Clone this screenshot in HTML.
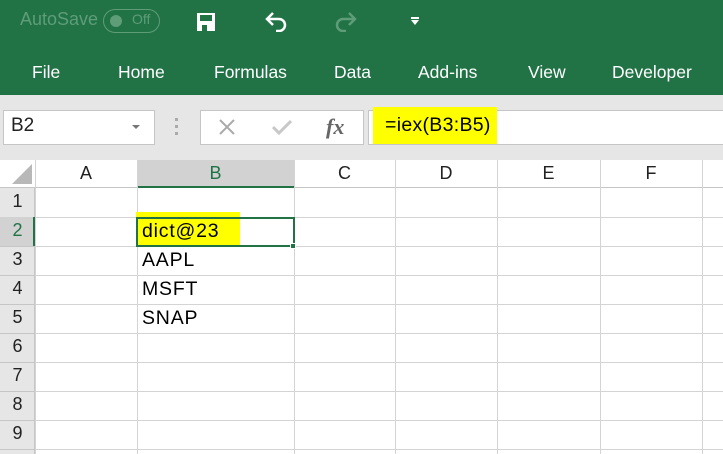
<!DOCTYPE html><html><head><style>
*{margin:0;padding:0;box-sizing:border-box}
body{width:723px;height:454px;overflow:hidden;background:#fff;font-family:"Segoe UI","Liberation Sans",sans-serif;position:relative}
.a{position:absolute}
.tab{position:absolute;top:62px;color:#fff;font-size:17.5px}
.hl{position:absolute;background:#d4d4d4}
.vl{position:absolute;width:1px;background:#d4d4d4;top:160px;height:294px}
.rn{position:absolute;left:0;width:35px;text-align:center;font-size:18px;color:#222}
.cn{position:absolute;top:163px;font-size:18px;color:#222;text-align:center}
.cell{position:absolute;left:142px;font-size:19.5px;letter-spacing:0.8px;color:#000}
</style></head><body>
<div class="a" style="left:0;top:0;width:723px;height:95px;background:#217346"></div>
<div class="a" style="left:20px;top:9px;font-size:18px;color:#5f9c78">AutoSave</div>
<div class="a" style="left:103px;top:9px;width:57px;height:24px;border:1px solid #5f9c78;border-radius:12px"></div>
<div class="a" style="left:110px;top:15px;width:12px;height:12px;border-radius:6px;background:#5f9c78"></div>
<div class="a" style="left:132px;top:11px;font-size:14px;color:#5f9c78">Off</div>
<svg class="a" style="left:196px;top:12px" width="20" height="20" viewBox="0 0 20 20"><rect x="1" y="1" width="18" height="18" fill="#fff"/><rect x="4" y="3" width="12" height="6" fill="#217346"/><rect x="6" y="13" width="5" height="6" fill="#217346"/></svg>
<svg class="a" style="left:264px;top:10px" width="24" height="22" viewBox="0 0 24 22"><path d="M4 9 H15 A6 6 0 0 1 15 21 H12" fill="none" stroke="#fff" stroke-width="2.5"/><path d="M9 3 L3 9 L9 15" fill="none" stroke="#fff" stroke-width="2.5"/></svg>
<svg class="a" style="left:334px;top:10px" width="24" height="22" viewBox="0 0 24 22"><path d="M20 9 H9 A6 6 0 0 0 9 21 H12" fill="none" stroke="#5f9c78" stroke-width="2.5"/><path d="M15 3 L21 9 L15 15" fill="none" stroke="#5f9c78" stroke-width="2.5"/></svg>
<div class="a" style="left:411px;top:17px;width:8px;height:2px;background:#fff"></div>
<svg class="a" style="left:411px;top:20px" width="8" height="5"><path d="M0 0H8L4 5Z" fill="#fff"/></svg>
<div class="tab" style="left:32px">File</div>
<div class="tab" style="left:118px">Home</div>
<div class="tab" style="left:214px">Formulas</div>
<div class="tab" style="left:334px">Data</div>
<div class="tab" style="left:418px">Add-ins</div>
<div class="tab" style="left:528px">View</div>
<div class="tab" style="left:612px">Developer</div>
<div class="a" style="left:0;top:95px;width:723px;height:65px;background:#e6e6e6"></div>
<div class="a" style="left:3px;top:110px;width:152px;height:35px;background:#fff;border:1px solid #c6c6c6"></div>
<div class="a" style="left:11px;top:115px;font-size:19px;color:#222">B2</div>
<svg class="a" style="left:132px;top:125px" width="8" height="4"><path d="M0 0H8L4 4Z" fill="#777"/></svg>
<div class="a" style="left:175px;top:118px;width:3px;height:3px;background:#aaa"></div>
<div class="a" style="left:175px;top:125px;width:3px;height:3px;background:#aaa"></div>
<div class="a" style="left:175px;top:132px;width:3px;height:3px;background:#aaa"></div>
<div class="a" style="left:200px;top:110px;width:164px;height:35px;background:#fff;border:1px solid #c6c6c6"></div>
<svg class="a" style="left:219px;top:119px" width="16" height="16"><path d="M1 1L15 15M15 1L1 15" stroke="#aaa" stroke-width="2"/></svg>
<svg class="a" style="left:272px;top:119px" width="20" height="16"><path d="M1 8L7 14L19 2" fill="none" stroke="#c8c8c8" stroke-width="3"/></svg>
<div class="a" style="left:326px;top:114px;font-size:22px;font-style:italic;font-weight:bold;font-family:'Liberation Serif',serif;color:#666">fx</div>
<div class="a" style="left:368px;top:110px;width:360px;height:35px;background:#fff;border:1px solid #c6c6c6"></div>
<div class="a" style="left:373px;top:107px;width:124px;height:37px;background:#ffff00"></div>
<div class="a" style="left:385px;top:114px;font-size:19.5px;letter-spacing:0.3px;color:#000">=iex(B3:B5)</div>
<div class="a" style="left:0;top:160px;width:723px;height:28px;background:#fff;border-bottom:1px solid #c6c6c6"></div>
<div class="a" style="left:0;top:188px;width:35px;height:266px;background:#e6e6e6;border-right:1px solid #c6c6c6"></div>
<svg class="a" style="left:11px;top:163px" width="22" height="22"><path d="M21 1V21H1Z" fill="#b8b8b8"/></svg>
<div class="a" style="left:137px;top:160px;width:157px;height:28px;background:#d2d2d2;border-bottom:2px solid #217346"></div>
<div class="vl" style="left:35px"></div><div class="vl" style="left:137px"></div><div class="vl" style="left:294px"></div><div class="vl" style="left:395px"></div><div class="vl" style="left:497px"></div><div class="vl" style="left:600px"></div><div class="vl" style="left:702px"></div>
<div class="hl" style="left:35px;top:217px;width:688px;height:1px"></div>
<div class="hl" style="left:35px;top:246px;width:688px;height:1px"></div>
<div class="hl" style="left:35px;top:275px;width:688px;height:1px"></div>
<div class="hl" style="left:35px;top:304px;width:688px;height:1px"></div>
<div class="hl" style="left:35px;top:333px;width:688px;height:1px"></div>
<div class="hl" style="left:35px;top:362px;width:688px;height:1px"></div>
<div class="hl" style="left:35px;top:391px;width:688px;height:1px"></div>
<div class="hl" style="left:35px;top:420px;width:688px;height:1px"></div>
<div class="hl" style="left:35px;top:449px;width:688px;height:1px"></div>
<div class="hl" style="left:0;top:217px;width:35px;height:1px;background:#c6c6c6"></div>
<div class="hl" style="left:0;top:246px;width:35px;height:1px;background:#c6c6c6"></div>
<div class="hl" style="left:0;top:275px;width:35px;height:1px;background:#c6c6c6"></div>
<div class="hl" style="left:0;top:304px;width:35px;height:1px;background:#c6c6c6"></div>
<div class="hl" style="left:0;top:333px;width:35px;height:1px;background:#c6c6c6"></div>
<div class="hl" style="left:0;top:362px;width:35px;height:1px;background:#c6c6c6"></div>
<div class="hl" style="left:0;top:391px;width:35px;height:1px;background:#c6c6c6"></div>
<div class="hl" style="left:0;top:420px;width:35px;height:1px;background:#c6c6c6"></div>
<div class="hl" style="left:0;top:449px;width:35px;height:1px;background:#c6c6c6"></div>
<div class="a" style="left:0;top:217px;width:35px;height:29px;background:#d2d2d2;border-right:2px solid #217346"></div>
<div class="cn" style="left:35px;width:102px">A</div>
<div class="cn" style="left:137px;width:157px;color:#217346">B</div>
<div class="cn" style="left:294px;width:101px">C</div>
<div class="cn" style="left:395px;width:102px">D</div>
<div class="cn" style="left:497px;width:103px">E</div>
<div class="cn" style="left:600px;width:102px">F</div>
<div class="rn" style="top:191px">1</div>
<div class="rn" style="top:220px;color:#217346">2</div>
<div class="rn" style="top:249px">3</div>
<div class="rn" style="top:278px">4</div>
<div class="rn" style="top:307px">5</div>
<div class="rn" style="top:336px">6</div>
<div class="rn" style="top:365px">7</div>
<div class="rn" style="top:394px">8</div>
<div class="rn" style="top:423px">9</div>
<div class="a" style="left:136px;top:212px;width:104px;height:34px;background:#ffff00"></div>
<div class="a" style="left:136px;top:217px;width:159px;height:30px;border:2px solid #217346"></div>
<div class="a" style="left:290px;top:243px;width:6px;height:6px;background:#217346;border:1px solid #fff"></div>
<div class="cell" style="top:220px">dict@23</div>
<div class="cell" style="top:249px">AAPL</div>
<div class="cell" style="top:278px">MSFT</div>
<div class="cell" style="top:307px">SNAP</div>
</body></html>
